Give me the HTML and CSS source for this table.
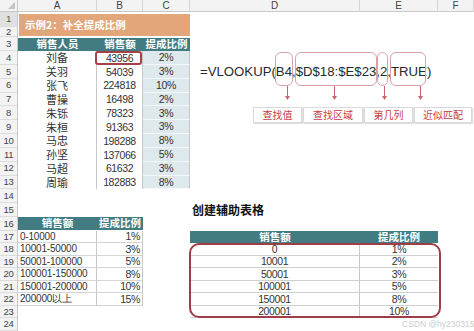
FILE: index.html
```html
<!DOCTYPE html>
<html lang="zh">
<head>
<meta charset="utf-8">
<title>VLOOKUP 近似匹配</title>
<link rel="stylesheet" href="styles.css">
</head>
<body>
<div class="sheet">
  <div class="corner"><span class="tri"></span></div>
  <div class="colhead">A</div>
  <div class="colhead">B</div>
  <div class="colhead">C</div>
  <div class="colhead">D</div>
  <div class="colhead">E</div>
  <div class="colhead">F</div>

  <div class="rowheads">
    <div class="rh sel">1</div><div class="rh">2</div><div class="rh">3</div><div class="rh">4</div>
    <div class="rh">5</div><div class="rh">6</div><div class="rh">7</div><div class="rh">8</div>
    <div class="rh">9</div><div class="rh">10</div><div class="rh">11</div><div class="rh">12</div>
    <div class="rh">13</div><div class="rh">14</div><div class="rh">15</div><div class="rh">16</div>
    <div class="rh">17</div><div class="rh">18</div><div class="rh">19</div><div class="rh">20</div>
    <div class="rh">21</div><div class="rh">22</div><div class="rh">23</div><div class="rh">24</div>
  </div>

  <div class="title">示例2：补全提成比例</div>

  <div class="tbl-main">
    <div class="th">销售人员</div><div class="th">销售额</div><div class="th">提成比例</div>
    <div class="td name">刘备</div><div class="td num hl">43956</div><div class="td pct">2%</div>
    <div class="td name">关羽</div><div class="td num">54039</div><div class="td pct">3%</div>
    <div class="td name">张飞</div><div class="td num">224818</div><div class="td pct">10%</div>
    <div class="td name">曹操</div><div class="td num">16498</div><div class="td pct">2%</div>
    <div class="td name">朱铄</div><div class="td num">78323</div><div class="td pct">3%</div>
    <div class="td name">朱桓</div><div class="td num">91363</div><div class="td pct">3%</div>
    <div class="td name">马忠</div><div class="td num">198288</div><div class="td pct">8%</div>
    <div class="td name">孙坚</div><div class="td num">137066</div><div class="td pct">5%</div>
    <div class="td name">马超</div><div class="td num">61632</div><div class="td pct">3%</div>
    <div class="td name">周瑜</div><div class="td num">182883</div><div class="td pct">8%</div>
  </div>

  <div class="annot">
    <div class="formula">=VLOOKUP(<span class="seg s1">B4</span>,<span class="seg s2">$D$18:$E$23</span><span class="seg s3">,2</span>,<span class="seg s4">TRUE</span>)</div>
    <svg class="arrows" width="284" height="60" viewBox="0 0 284 60" aria-hidden="true">
      <g stroke="#c9646d" stroke-width="1" fill="none">
        <path d="M97.5 35V46"/><path d="M144.5 35V46"/><path d="M194.5 35V46"/><path d="M230.5 35V46"/>
      </g>
      <g fill="#c9646d">
        <path d="M95 45h5l-2.5 4z"/><path d="M142 45h5l-2.5 4z"/><path d="M192 45h5l-2.5 4z"/><path d="M228 45h5l-2.5 4z"/>
      </g>
    </svg>
    <div class="labels">
      <div class="lbl w1">查找值</div>
      <div class="lbl w2">查找区域</div>
      <div class="lbl w3">第几列</div>
      <div class="lbl w4">近似匹配</div>
    </div>
  </div>

  <div class="tbl-range">
    <div class="th">销售额</div><div class="th">提成比例</div>
    <div class="rd txt">0-10000</div><div class="rd rt">1%</div>
    <div class="rd txt">10001-50000</div><div class="rd rt">3%</div>
    <div class="rd txt">50001-100000</div><div class="rd rt">5%</div>
    <div class="rd txt">100001-150000</div><div class="rd rt">8%</div>
    <div class="rd txt">150001-200000</div><div class="rd rt">10%</div>
    <div class="rd txt">200000以上</div><div class="rd rt">15%</div>
  </div>

  <div class="help-title">创建辅助表格</div>

  <div class="tbl-help">
    <div class="th">销售额</div><div class="th">提成比例</div>
    <div class="hbody">
      <div class="hd">0</div><div class="hd">1%</div>
      <div class="hd">10001</div><div class="hd">2%</div>
      <div class="hd">50001</div><div class="hd">3%</div>
      <div class="hd">100001</div><div class="hd">5%</div>
      <div class="hd">150001</div><div class="hd">8%</div>
      <div class="hd">200001</div><div class="hd">10%</div>
    </div>
  </div>

  <div class="watermark">CSDN @hy230315</div>
</div>
</body>
</html>
```

FILE: styles.css
```css
* { box-sizing: border-box; margin: 0; padding: 0; }

body {
  margin: 0;
  background: #fff;
  font-family: "Noto Sans CJK SC", "Liberation Sans", sans-serif;
  color: #333;
  overflow: hidden;
}

.sheet {
  position: relative;
  width: 474px;
  height: 331px;
  display: grid;
  grid-template-columns: 18px 79px 46px 47px 170px 78px 36px;
  grid-template-rows: 12px 15px 10px 14px repeat(13, 13.85px) repeat(8, 12.5px);
}

/* ---------- Excel chrome ---------- */
.corner {
  position: relative;
  background: #f3f3f3;
  border-right: 1px solid #c9c9c9;
  border-bottom: 1px solid #c9c9c9;
}
.tri {
  position: absolute;
  right: 2px;
  bottom: 2px;
  width: 0;
  height: 0;
  border-left: 7px solid transparent;
  border-bottom: 7px solid #c4c4c4;
}
.colhead {
  background: #f3f3f3;
  border-right: 1px solid #d6d6d6;
  border-bottom: 1px solid #c9c9c9;
  font: 10px/11px "Liberation Sans", sans-serif;
  color: #444;
  text-align: center;
}
.rowheads {
  grid-column: 1;
  grid-row: 2 / 26;
  display: grid;
  grid-template-rows: 15px 10px 14px repeat(13, 13.85px) repeat(8, 12.5px);
  background: #f3f3f3;
  border-right: 1px solid #c9c9c9;
}
.rh {
  display: flex;
  align-items: center;
  justify-content: center;
  border-bottom: 1px solid #dcdcdc;
  font: 9.5px/1 "Liberation Sans", sans-serif;
  letter-spacing: -0.4px;
  color: #444;
  overflow: hidden;
}
.rh.sel {
  background: #e1e1e1;
  color: #217346;
}

/* ---------- title ---------- */
.title {
  grid-column: 2 / 5;
  grid-row: 2 / 4;
  margin: 2px 0 1px 1px;
  background: #e2a67a;
  color: #fff;
  font-weight: bold;
  font-size: 10.5px;
  line-height: 1;
  display: flex;
  align-items: center;
  padding-left: 6px;
  white-space: nowrap;
}

/* ---------- main table ---------- */
.tbl-main {
  grid-column: 2 / 5;
  grid-row: 4 / 15;
  display: grid;
  grid-template-columns: 79px 46px 47px;
  grid-template-rows: 14px repeat(10, 13.85px);
}
.th {
  background: #427b82;
  color: #fff;
  font-weight: bold;
  font-size: 10.5px;
  line-height: 1;
  display: flex;
  align-items: center;
  justify-content: center;
  white-space: nowrap;
}
.tbl-main .th { border-top: 1px solid #fff; }
.td {
  display: flex;
  align-items: center;
  justify-content: center;
  font-size: 11px;
  line-height: 1;
  border-right: 1px solid #c8c8c8;
  white-space: nowrap;
}
.td.num, .td.pct, .hd, .rd {
  font-family: "Liberation Sans", sans-serif;
  font-size: 10.5px;
  line-height: 1;
  letter-spacing: -0.4px;
  white-space: nowrap;
}
.td.pct {
  background: #dde9ec;
  border-bottom: 1px solid #f4f8f9;
  border-right: 1px solid #c4c4c4;
}
.hl { position: relative; }
.hl::after {
  content: "";
  position: absolute;
  left: -2px;
  right: 0;
  top: 0;
  bottom: 0;
  border: 2px solid #a4414b;
  border-radius: 3px;
}

/* ---------- annotation ---------- */
.annot {
  grid-column: 5 / 8;
  grid-row: 5 / 11;
  position: relative;
}
.formula {
  margin-top: 13px;
  padding-left: 10px;
  font: 13.2px/16px "Liberation Sans", sans-serif;
  color: #1e2b30;
  white-space: nowrap;
}
.seg { position: relative; }
.seg::before {
  content: "";
  position: absolute;
  top: -12px;
  bottom: -7px;
  left: -1px;
  right: -1px;
  border: 1px solid #d6a2a8;
  border-radius: 6px;
}
.s3::before { left: 1px; }
.s4::before { right: 1px; }
.arrows {
  position: absolute;
  left: 0;
  top: 0;
}
.labels {
  display: flex;
  gap: 1px;
  margin-top: 27px;
  padding-left: 63px;
}
.lbl {
  height: 16px;
  border: 1px solid #d9d9d9;
  box-shadow: 1px 1px 1px rgba(0, 0, 0, 0.12);
  background: #fff;
  color: #c63c42;
  font-size: 10px;
  line-height: 1;
  display: flex;
  align-items: center;
  justify-content: center;
  white-space: nowrap;
}
.w1 { width: 49px; }
.w2 { width: 60px; }
.w3 { width: 49px; }
.w4 { width: 58px; }

/* ---------- range table ---------- */
.tbl-range {
  grid-column: 2 / 4;
  grid-row: 17 / 24;
  display: grid;
  grid-template-columns: 79px 46px;
  grid-template-rows: 13.85px repeat(6, 12.5px);
}
.tbl-range .th { margin-bottom: 1px; }
.rd {
  display: flex;
  align-items: center;
  border-bottom: 1px solid #d4d4d4;
  border-right: 1px solid #c8c8c8;
  color: #333;
  overflow: hidden;
}
.rd.txt { padding-left: 2px; font-size: 10px; letter-spacing: -0.2px; }
.rd.rt { justify-content: flex-end; padding-right: 2px; }

/* ---------- helper table ---------- */
.help-title {
  grid-column: 5 / 7;
  grid-row: 16;
  display: flex;
  align-items: center;
  padding-left: 2px;
  font-size: 12px;
  line-height: 1;
  font-weight: bold;
  color: #111;
  white-space: nowrap;
}
.tbl-help {
  grid-column: 5 / 7;
  grid-row: 18 / 25;
  display: grid;
  grid-template-columns: 170px 78px;
  grid-template-rows: 12.5px 75px;
}
.hbody {
  grid-column: 1 / 3;
  position: relative;
  display: grid;
  grid-template-columns: 170px 78px;
  grid-template-rows: repeat(6, 12.5px);
}
.hbody::after {
  content: "";
  position: absolute;
  left: -1px;
  right: -3px;
  top: 0;
  bottom: 0;
  border: 2px solid #9e3e48;
  border-radius: 10px;
}
.hd {
  display: flex;
  align-items: center;
  justify-content: center;
  border-bottom: 1px solid #cfcfcf;
  color: #333;
}
.hd:nth-child(odd) { border-right: 1px solid #c8c8c8; }

.watermark {
  position: absolute;
  z-index: 2;
  left: 402px;
  top: 319px;
  font: 8.5px/10px "Liberation Sans", sans-serif;
  color: #cdcdcd;
  white-space: nowrap;
}
```
